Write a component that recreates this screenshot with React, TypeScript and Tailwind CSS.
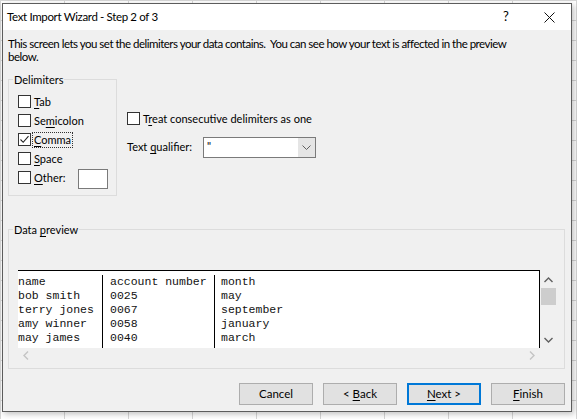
import type { ReactNode } from 'react'

const UI = "font-['Lato','Noto_Sans',sans-serif]"

const ROWS = [
  ['name', 'account number', 'month'],
  ['bob smith', '0025', 'may'],
  ['terry jones', '0067', 'september'],
  ['amy winner', '0058', 'january'],
  ['may james', '0040', 'march'],
]

function Box({ checked = false }: { checked?: boolean }) {
  return (
    <span className="flex h-[13px] w-[13px] shrink-0 items-center justify-center border border-[#333333] bg-white">
      {checked && (
        <svg width="11" height="11" viewBox="0 0 11 11">
          <path d="M1.5 5.5 L4.2 8.3 L9.5 2.2" fill="none" stroke="#222" strokeWidth="1.1" />
        </svg>
      )}
    </span>
  )
}

function Check({ label, u, checked, focus, children }: { label: string; u: number; checked?: boolean; focus?: boolean; children?: ReactNode }) {
  const text = (
    <>
      {label.slice(0, u)}
      <span className="underline underline-offset-2">{label[u]}</span>
      {label.slice(u + 1)}
    </>
  )
  return (
    <div className="flex h-[19px] items-center whitespace-nowrap">
      <Box checked={checked} />
      <span className={`ml-[2px] px-[1px] leading-[14px] ${focus ? 'outline outline-1 outline-dotted outline-[#333]' : ''}`}>{text}</span>
      {children}
    </div>
  )
}

function Btn({ pre = '', u, post, def }: { pre?: string; u?: string; post: string; def?: boolean }) {
  return (
    <button
      className={`h-[22px] w-[74px] bg-[#e1e1e1] text-center leading-[18px] text-black ${
        def ? 'border-2 border-[#0078d7]' : 'border border-[#adadad]'
      }`}
    >
      {pre}
      {u && <span className="underline underline-offset-2">{u}</span>}
      {post}
    </button>
  )
}

export default function App() {
  return (
    <div className="h-[419px] w-[577px] overflow-hidden bg-white bg-[linear-gradient(to_right,#d6d6d6_1px,transparent_1px),linear-gradient(to_bottom,#d6d6d6_1px,transparent_1px)] bg-[size:64px_20px] pl-[2px] pt-[3px]">
      <div className={`flex h-[409px] w-[570px] flex-col border border-[#5c5c5c] bg-[#f0f0f0] text-[11px] text-black shadow-[2px_2px_6px_rgba(0,0,0,0.25)] ${UI}`}>
        {/* Title bar */}
        <div className="flex h-[26px] shrink-0 items-center bg-white pl-[4px] text-[11.5px]">
          <span className="flex-1 tracking-[-0.35px]">Text Import Wizard - Step 2 of 3</span>
          <span className="w-[20px] text-center text-[13px]">?</span>
          <span className="ml-[23px] mr-[12px] flex w-[20px] justify-center">
            <svg width="11" height="11" viewBox="0 0 11 11">
              <path d="M0.5 0.5 L10.5 10.5 M10.5 0.5 L0.5 10.5" stroke="#111" strokeWidth="1" />
            </svg>
          </span>
        </div>

        <div className="flex flex-1 flex-col pl-[5px] pr-[5px]">
          <p className="w-[505px] pt-[7px] text-[11.5px] leading-[13px] tracking-[-0.5px]">
            This screen lets you set the delimiters your data contains.&nbsp; You can see how your text is affected in the preview below.
          </p>

          {/* Delimiters + options */}
          <div className="mt-[9px] flex">
            <fieldset className="w-[109px] border border-[#dcdcdc] pb-[6px] pl-[9px] pt-[5px]">
              <legend className="-ml-[5px] px-[1px] leading-[15px]">Delimiters</legend>
              <Check label="Tab" u={0} />
              <Check label="Semicolon" u={2} />
              <Check label="Comma" u={0} checked focus />
              <Check label="Space" u={0} />
              <div className="h-[21px]">
                <Check label="Other:" u={0}>
                  <span className="ml-[12px] mt-[2px] h-[20px] w-[30px] border border-[#7a7a7a] bg-white" />
                </Check>
              </div>
            </fieldset>

            <div className="ml-[10px] flex flex-col">
              <div className="mt-[37px]">
                <Check label="Treat consecutive delimiters as one" u={1} />
              </div>
              <div className="mt-[9px] flex items-center whitespace-nowrap">
                <span className="w-[76px]">
                  Text <span className="underline underline-offset-2">q</span>ualifier:
                </span>
                <div className="flex h-[21px] w-[113px] border border-[#7a7a7a] bg-white">
                  <span className="flex-1 pl-[3px] leading-[16px]">"</span>
                  <span className="flex w-[17px] items-center justify-center bg-[#e5e5e5]">
                    <svg width="9" height="5" viewBox="0 0 9 5">
                      <path d="M0.5 0.5 L4.5 4.5 L8.5 0.5" fill="none" stroke="#606060" strokeWidth="1" />
                    </svg>
                  </span>
                </div>
              </div>
            </div>
          </div>

          {/* Data preview */}
          <fieldset className="mt-[26px] w-[557px] border border-[#dcdcdc] pb-[5px] pl-[9px]">
            <legend className="-ml-[5px] px-[1px] leading-[15px]">
              Data <span className="underline underline-offset-2">p</span>review
            </legend>
            <div className="mt-[33px] flex h-[78px]">
              <div className="flex w-[522px] border-r border-t border-black bg-white pt-[4px] font-['Liberation_Mono',monospace] text-[11.5px] leading-[14px] text-[#111]">
                <div className="w-[85px] border-r border-black">
                  {ROWS.map((r) => (
                    <div key={r[0]} className="whitespace-pre">{r[0]}</div>
                  ))}
                </div>
                <div className="w-[112px] border-r border-black pl-[7px]">
                  {ROWS.map((r) => (
                    <div key={r[0]} className="whitespace-pre">{r[1]}</div>
                  ))}
                </div>
                <div className="pl-[6px]">
                  {ROWS.map((r) => (
                    <div key={r[0]} className="whitespace-pre">{r[2]}</div>
                  ))}
                </div>
              </div>
              <div className="flex w-[17px] flex-col items-center">
                <svg className="mt-[7px]" width="9" height="6" viewBox="0 0 9 6">
                  <path d="M0.5 5 L4.5 1 L8.5 5" fill="none" stroke="#606060" strokeWidth="1.4" />
                </svg>
                <span className="mt-[5px] h-[17px] w-[15px] bg-[#cdcdcd]" />
                <svg className="mt-auto mb-[5px]" width="9" height="6" viewBox="0 0 9 6">
                  <path d="M0.5 1 L4.5 5 L8.5 1" fill="none" stroke="#606060" strokeWidth="1.4" />
                </svg>
              </div>
            </div>
            <div className="flex h-[15px] w-[522px] items-center justify-between px-[5px]">
              <svg width="6" height="9" viewBox="0 0 6 9">
                <path d="M5 0.5 L1 4.5 L5 8.5" fill="none" stroke="#c4c4c4" strokeWidth="1.4" />
              </svg>
              <svg width="6" height="9" viewBox="0 0 6 9">
                <path d="M1 0.5 L5 4.5 L1 8.5" fill="none" stroke="#c4c4c4" strokeWidth="1.4" />
              </svg>
            </div>
          </fieldset>

          {/* Buttons */}
          <div className="mt-[14px] flex justify-end gap-[10px] pr-[1px] text-[11.5px]">
            <Btn post="Cancel" />
            <Btn pre="< " u="B" post="ack" />
            <Btn u="N" post="ext >" def />
            <Btn u="F" post="inish" />
          </div>
        </div>
      </div>
    </div>
  )
}
